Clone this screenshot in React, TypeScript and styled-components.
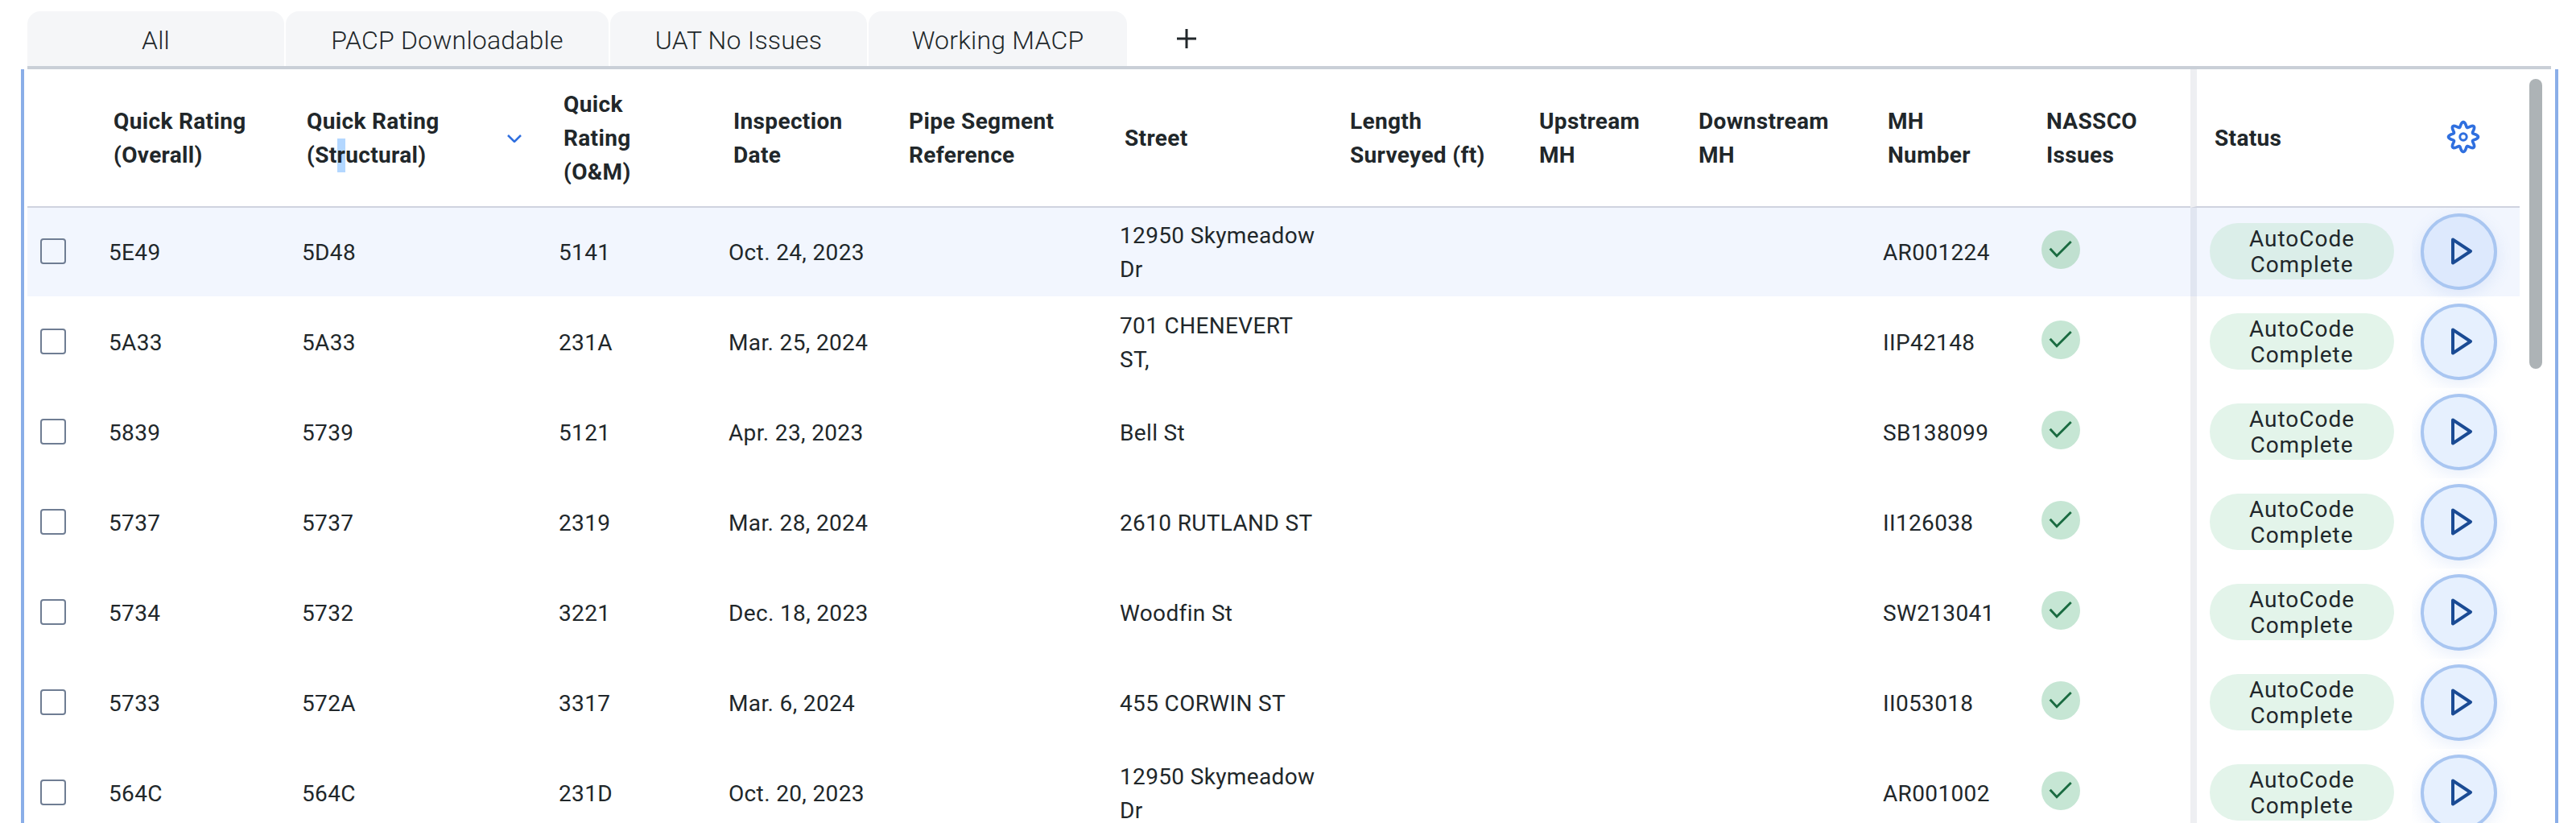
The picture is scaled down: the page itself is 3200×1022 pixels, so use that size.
import styled, { createGlobalStyle } from "styled-components"

const columns = "95px 240px 319px 211px 218px 268px 280px 235px 198px 235px 197px 191px 275px 134px"

const rows = [
  { overall: "5E49", structural: "5D48", om: "5141", date: "Oct. 24, 2023", street: "12950 Skymeadow Dr", mh: "AR001224" },
  { overall: "5A33", structural: "5A33", om: "231A", date: "Mar. 25, 2024", street: "701 CHENEVERT ST,", mh: "IIP42148" },
  { overall: "5839", structural: "5739", om: "5121", date: "Apr. 23, 2023", street: "Bell St", mh: "SB138099" },
  { overall: "5737", structural: "5737", om: "2319", date: "Mar. 28, 2024", street: "2610 RUTLAND ST", mh: "II126038" },
  { overall: "5734", structural: "5732", om: "3221", date: "Dec. 18, 2023", street: "Woodfin St", mh: "SW213041" },
  { overall: "5733", structural: "572A", om: "3317", date: "Mar. 6, 2024", street: "455 CORWIN ST", mh: "II053018" },
  { overall: "564C", structural: "564C", om: "231D", date: "Oct. 20, 2023", street: "12950 Skymeadow Dr", mh: "AR001002" },
]

const tabs = [
  { label: "All", width: 319 },
  { label: "PACP Downloadable", width: 401 },
  { label: "UAT No Issues", width: 319 },
  { label: "Working MACP", width: 321 },
]

// eight rounded teeth, same wave all the way round
const gearPath = Array.from({ length: 97 }, (_, i) => {
  const angle = (i / 96) * Math.PI * 2
  const radius = 15.5 + 3 * Math.cos(angle * 8)
  const x = 22 + radius * Math.sin(angle)
  const y = 22 - radius * Math.cos(angle)
  return `${i === 0 ? "M" : "L"}${x.toFixed(2)} ${y.toFixed(2)}`
}).join(" ") + "Z"

const App = () => {
  return (
    <Page>
      <GlobalStyle />

      <TabBar>
        {tabs.map(({ label, width }) => (
          <Tab $width={width} key={label}>{label}</Tab>
        ))}
        <AddTab>
          <svg width="24" height="24" viewBox="0 0 24 24">
            <path d="M12 0V24M0 12H24" stroke="#21272a" strokeWidth="3" />
          </svg>
        </AddTab>
      </TabBar>

      <Frame>
        <Table>
          <HeaderRow>
            <HeaderCell />
            <HeaderCell>Quick Rating<br />(Overall)</HeaderCell>
            <HeaderCell>
              <SortLabel>
                <span>Quick Rating<br />(St<Selected>r</Selected>uctural)</span>
                <SortIcon width="18" height="10" viewBox="0 0 18 10">
                  <path d="M1 1L9 9L17 1" fill="none" stroke="#2f6fdf" strokeWidth="2.5" />
                </SortIcon>
              </SortLabel>
            </HeaderCell>
            <HeaderCell>Quick<br />Rating<br />(O&amp;M)</HeaderCell>
            <HeaderCell>Inspection<br />Date</HeaderCell>
            <HeaderCell>Pipe Segment<br />Reference</HeaderCell>
            <HeaderCell>Street</HeaderCell>
            <HeaderCell>Length<br />Surveyed (ft)</HeaderCell>
            <HeaderCell>Upstream<br />MH</HeaderCell>
            <HeaderCell>Downstream<br />MH</HeaderCell>
            <HeaderCell>MH<br />Number</HeaderCell>
            <HeaderCell>NASSCO<br />Issues</HeaderCell>
            <StatusHeader>Status</StatusHeader>
            <SettingsHeader>
              <svg width="44" height="44" viewBox="0 0 44 44">
                <path d={gearPath} fill="none" stroke="#2f6fdf" strokeWidth="3.6" strokeLinejoin="round" />
                <circle cx="22" cy="22" r="4.2" fill="none" stroke="#2f6fdf" strokeWidth="3" />
              </svg>
            </SettingsHeader>
          </HeaderRow>

          {rows.map((row, index) => (
            <Row $active={index === 0} key={row.overall + row.mh}>
              <CheckCell><Checkbox /></CheckCell>
              <Cell>{row.overall}</Cell>
              <Cell>{row.structural}</Cell>
              <Cell>{row.om}</Cell>
              <Cell>{row.date}</Cell>
              <Cell />
              <StreetCell>{row.street}</StreetCell>
              <Cell />
              <Cell />
              <Cell />
              <Cell>{row.mh}</Cell>
              <WidgetCell>
                <IssueBadge $active={index === 0}>
                  <svg width="48" height="48" viewBox="0 0 48 48">
                    <path d="M10.7 22.7L19 31.7L36.7 14" fill="none" stroke="#1a6b41" strokeWidth="3" />
                  </svg>
                </IssueBadge>
              </WidgetCell>
              <StatusCell>
                <StatusPill $active={index === 0}>AutoCode<br />Complete</StatusPill>
              </StatusCell>
              <ActionCell>
                <PlayButton $active={index === 0}>
                  <PlayIcon width="32" height="40" viewBox="0 0 32 40">
                    <path d="M5 5.5L27 20L5 34.5Z" fill="none" stroke="#1a4b94" strokeWidth="4" strokeLinejoin="round" />
                  </PlayIcon>
                </PlayButton>
              </ActionCell>
            </Row>
          ))}
        </Table>

        <ScrollThumb />
      </Frame>
    </Page>
  )
}

const GlobalStyle = createGlobalStyle`
  html, body {
    margin: 0;
    background: #fff;
    overflow: hidden;
  }
`

const Page = styled.div`
  height: 100vh;
  padding-top: 14px;
  box-sizing: border-box;
  overflow: hidden;
  color: #21272a;
  font-family: Roboto, "Liberation Sans", sans-serif;
`

const TabBar = styled.div`
  display: flex;
  gap: 2px;
  height: 72px;
  box-sizing: border-box;
  margin: 0 31px 0 34px;
  border-bottom: 4px solid #c9cfd7;
`

const Tab = styled.div<{ $width: number }>`
  width: ${({ $width }) => $width}px;
  height: 68px;
  box-sizing: border-box;
  padding-top: 4px;
  display: flex;
  align-items: center;
  justify-content: center;
  background: #f5f6f8;
  border-radius: 16px 16px 0 0;
  font-size: 32px;
  font-weight: 300;
  letter-spacing: 0.2px;
`

const AddTab = styled.div`
  display: flex;
  align-items: center;
  margin-left: 60px;
  height: 68px;
`

const Frame = styled.div`
  display: flex;
  height: calc(100vh - 86px);
  box-sizing: border-box;
  width: 3152px;
  margin-left: 26px;
  padding-left: 4px;
  border-left: 4px solid #8aaee8;
  border-right: 4px solid #8aaee8;
  overflow: hidden;
`

const Table = styled.div`
  width: 3096px;
  flex-shrink: 0;
`

const HeaderRow = styled.div`
  display: grid;
  grid-template-columns: ${columns};
  height: 172px;
`

const HeaderCell = styled.div`
  display: flex;
  align-items: center;
  padding-left: 12px;
  padding-top: 2px;
  border-bottom: 2px solid #cfd3df;
  font-size: 28px;
  font-weight: 700;
  line-height: 42px;
  letter-spacing: 0.35px;
`

const SortLabel = styled.div`
  display: flex;
  align-items: center;
  justify-content: space-between;
  width: 267px;
`

const SortIcon = styled.svg`
  flex-shrink: 0;
`

const Selected = styled.span`
  display: inline-block;
  background: #b3d7ff;
`

const StatusHeader = styled(HeaderCell)`
  padding-left: 22px;
  border-left: 8px solid #eeeff2;
`

const SettingsHeader = styled(HeaderCell)`
  padding-left: 42px;
  padding-top: 0;
  padding-bottom: 2px;
`

const Row = styled.div<{ $active: boolean }>`
  display: grid;
  grid-template-columns: ${columns};
  height: 112px;
  background: ${({ $active }) =>
    $active ? "linear-gradient(#f2f6fe, #f2f6fe) no-repeat top / 100% 110px" : "none"};
`

const Cell = styled.div`
  display: flex;
  align-items: center;
  padding: 0 6px;
  font-size: 28px;
  line-height: 42px;
  font-weight: 400;
  letter-spacing: 0.35px;
`

const WidgetCell = styled(Cell)`
  padding-bottom: 4px;
`

const CheckCell = styled(WidgetCell)`
  padding-left: 16px;
`

const Checkbox = styled.div`
  width: 32px;
  height: 32px;
  box-sizing: border-box;
  border: 2px solid #6f7d93;
  border-radius: 4px;
`

const StreetCell = styled(Cell)`
  padding-right: 24px;
`

const IssueBadge = styled.div<{ $active: boolean }>`
  width: 48px;
  height: 48px;
  margin-top: -4px;
  border-radius: 50%;
  background: ${({ $active }) => ($active ? "#c0e0d0" : "#c6e6d4")};
`

const StatusCell = styled(WidgetCell)`
  padding-left: 16px;
  border-left: 8px solid rgba(20, 30, 70, 0.07);
`

const StatusPill = styled.div<{ $active: boolean }>`
  width: 229px;
  height: 70px;
  box-sizing: border-box;
  padding-top: 2px;
  display: flex;
  align-items: center;
  justify-content: center;
  text-align: center;
  border-radius: 35px;
  background: ${({ $active }) => ($active ? "#dbeee9" : "#e3f4ea")};
  font-size: 28px;
  line-height: 32px;
  font-weight: 400;
  letter-spacing: 1px;
`

const ActionCell = styled(WidgetCell)`
  padding-left: 11px;
  overflow: hidden;
`

const PlayButton = styled.div<{ $active: boolean }>`
  width: 95px;
  height: 95px;
  box-sizing: border-box;
  display: flex;
  align-items: center;
  justify-content: center;
  border: 4px solid #a9c6f1;
  border-radius: 50%;
  background: ${({ $active }) => ($active ? "#dde9fd" : "#e6f0fe")};
  box-shadow: 0 6px 20px rgba(90, 140, 230, 0.14);
`

const PlayIcon = styled.svg`
  margin-left: 6px;
`

const ScrollThumb = styled.div`
  width: 16px;
  height: 360px;
  flex-shrink: 0;
  margin: 12px 0 0 12px;
  border-radius: 8px;
  background: #adb3b6;
`

export default App
